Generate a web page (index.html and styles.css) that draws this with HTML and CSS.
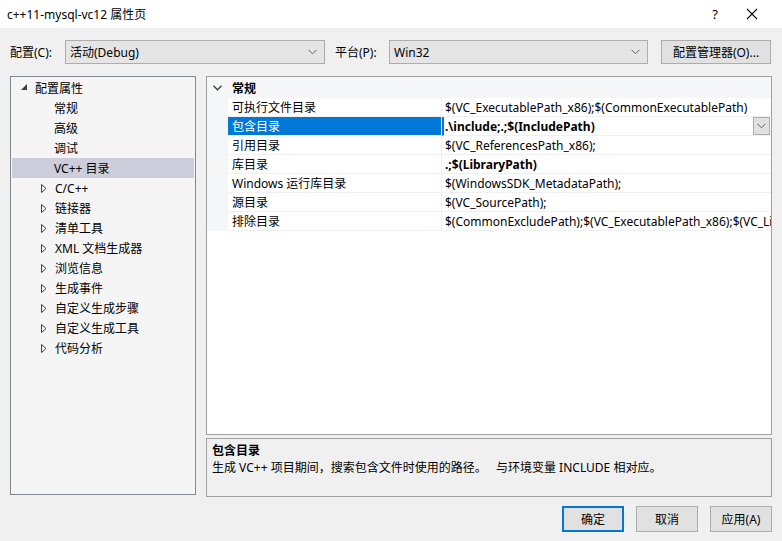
FILE: index.html
```html
<!DOCTYPE html>
<html>
<head>
  <meta charset="utf-8">
  <title>c++11-mysql-vc12 属性页</title>
  <link rel="stylesheet" href="styles.css">
</head>
<body>
  <div class="titlebar">
    <span class="title">c++11-mysql-vc12 属性页</span>
    <span class="help">?</span>
    <svg class="close" width="12" height="12" viewBox="0 0 12 12"><path d="M1 1L11 11M11 1L1 11" stroke="#000" stroke-width="1.1" fill="none"/></svg>
  </div>

  <div class="dialog">
    <!-- 配置 / 平台 -->
    <div class="toolbar">
      <label class="lbl-config">配置(C):</label>
      <div class="combo combo-config">
        <span>活动(Debug)</span>
        <svg width="9" height="6" viewBox="0 0 9 6"><path d="M0.5 0.8L4.5 4.8L8.5 0.8" stroke="#606060" fill="none"/></svg>
      </div>
      <label class="lbl-platform">平台(P):</label>
      <div class="combo combo-platform">
        <span>Win32</span>
        <svg width="9" height="6" viewBox="0 0 9 6"><path d="M0.5 0.8L4.5 4.8L8.5 0.8" stroke="#606060" fill="none"/></svg>
      </div>
      <button class="btn btn-manager">配置管理器(O)...</button>
    </div>

    <div class="panes">
      <div class="tree">
        <div class="node root">
          <svg class="arrow" width="6" height="6" viewBox="0 0 6 6"><path d="M6 0L6 6L0 6Z" fill="#404040"/></svg>
          <span>配置属性</span>
        </div>
        <div class="node leaf">常规</div>
        <div class="node leaf">高级</div>
        <div class="node leaf">调试</div>
        <div class="node leaf selected">VC++ 目录</div>
        <div class="node group"><svg class="arrow" width="6" height="9" viewBox="0 0 6 9"><path d="M0.5 0.5L5 4.5L0.5 8.5Z" stroke="#404040" fill="none"/></svg><span>C/C++</span></div>
        <div class="node group"><svg class="arrow" width="6" height="9" viewBox="0 0 6 9"><path d="M0.5 0.5L5 4.5L0.5 8.5Z" stroke="#404040" fill="none"/></svg><span>链接器</span></div>
        <div class="node group"><svg class="arrow" width="6" height="9" viewBox="0 0 6 9"><path d="M0.5 0.5L5 4.5L0.5 8.5Z" stroke="#404040" fill="none"/></svg><span>清单工具</span></div>
        <div class="node group"><svg class="arrow" width="6" height="9" viewBox="0 0 6 9"><path d="M0.5 0.5L5 4.5L0.5 8.5Z" stroke="#404040" fill="none"/></svg><span>XML 文档生成器</span></div>
        <div class="node group"><svg class="arrow" width="6" height="9" viewBox="0 0 6 9"><path d="M0.5 0.5L5 4.5L0.5 8.5Z" stroke="#404040" fill="none"/></svg><span>浏览信息</span></div>
        <div class="node group"><svg class="arrow" width="6" height="9" viewBox="0 0 6 9"><path d="M0.5 0.5L5 4.5L0.5 8.5Z" stroke="#404040" fill="none"/></svg><span>生成事件</span></div>
        <div class="node group"><svg class="arrow" width="6" height="9" viewBox="0 0 6 9"><path d="M0.5 0.5L5 4.5L0.5 8.5Z" stroke="#404040" fill="none"/></svg><span>自定义生成步骤</span></div>
        <div class="node group"><svg class="arrow" width="6" height="9" viewBox="0 0 6 9"><path d="M0.5 0.5L5 4.5L0.5 8.5Z" stroke="#404040" fill="none"/></svg><span>自定义生成工具</span></div>
        <div class="node group"><svg class="arrow" width="6" height="9" viewBox="0 0 6 9"><path d="M0.5 0.5L5 4.5L0.5 8.5Z" stroke="#404040" fill="none"/></svg><span>代码分析</span></div>
      </div>

      <div class="right">
        <div class="grid">
          <div class="category">
            <div class="gutter"><svg width="9" height="6" viewBox="0 0 9 6"><path d="M0.5 0.8L4.5 4.8L8.5 0.8" stroke="#404040" stroke-width="1.3" fill="none"/></svg></div>
            <div class="cat-name">常规</div>
          </div>
          <div class="prop">
            <div class="gutter"></div>
            <div class="name">可执行文件目录</div>
            <div class="value">$(VC_ExecutablePath_x86);$(CommonExecutablePath)</div>
          </div>
          <div class="prop active">
            <div class="gutter"></div>
            <div class="name">包含目录</div>
            <div class="value bold">.\include;.;$(IncludePath)
              <span class="drop"><svg width="9" height="6" viewBox="0 0 9 6"><path d="M0.5 0.8L4.5 4.8L8.5 0.8" stroke="#606060" fill="none"/></svg></span>
            </div>
          </div>
          <div class="prop">
            <div class="gutter"></div>
            <div class="name">引用目录</div>
            <div class="value">$(VC_ReferencesPath_x86);</div>
          </div>
          <div class="prop">
            <div class="gutter"></div>
            <div class="name">库目录</div>
            <div class="value bold">.;$(LibraryPath)</div>
          </div>
          <div class="prop">
            <div class="gutter"></div>
            <div class="name">Windows 运行库目录</div>
            <div class="value">$(WindowsSDK_MetadataPath);</div>
          </div>
          <div class="prop">
            <div class="gutter"></div>
            <div class="name">源目录</div>
            <div class="value">$(VC_SourcePath);</div>
          </div>
          <div class="prop">
            <div class="gutter"></div>
            <div class="name">排除目录</div>
            <div class="value">$(CommonExcludePath);$(VC_ExecutablePath_x86);$(VC_LibraryPath_x86)</div>
          </div>
        </div>

        <div class="desc">
          <div class="desc-title">包含目录</div>
          <div class="desc-text">生成 VC++ 项目期间，搜索包含文件时使用的路径。&nbsp;&nbsp;&nbsp;与环境变量 INCLUDE 相对应。</div>
        </div>
      </div>
    </div>

    <div class="footer">
      <button class="btn default">确定</button>
      <button class="btn">取消</button>
      <button class="btn">应用(A)</button>
    </div>
  </div>
</body>
</html>
```

FILE: styles.css
```css
body {
  margin: 0;
  width: 782px;
  height: 541px;
  overflow: hidden;
  background: #f0f0f0;
  font-family: "Segoe UI", "Noto Sans", "Noto Sans CJK SC", sans-serif;
  font-size: 12px;
  color: #000;
}

.titlebar {
  height: 28px;
  background: #fff;
  display: flex;
  align-items: center;
  padding-left: 7px;
}

.title {
  flex: 1;
  font-size: 12px;
}

.help {
  font-size: 13px;
  margin-right: 28px;
}

.close {
  margin-right: 24px;
}

.dialog {
  padding: 0 10px 0 10px;
}

.toolbar {
  display: flex;
  align-items: center;
  height: 24px;
  margin-top: 12px;
}

.lbl-config {
  width: 55px;
}

.lbl-platform {
  width: 54px;
  margin-left: 10px;
}

.combo {
  height: 24px;
  box-sizing: border-box;
  border: 1px solid #adadad;
  background: #e5e5e5;
  display: flex;
  align-items: center;
  justify-content: space-between;
  padding: 0 7px 0 4px;
}

.combo-config {
  width: 260px;
}

.combo-platform {
  width: 259px;
}

.btn {
  font-family: inherit;
  font-size: 12px;
  color: #000;
  background: #e1e1e1;
  border: 1px solid #adadad;
  height: 25px;
  box-sizing: border-box;
  padding: 0;
}

.btn-manager {
  width: 110px;
  height: 24px;
  margin-left: 13px;
}

.panes {
  display: flex;
  gap: 10px;
  margin-top: 12px;
  height: 421px;
}

.tree {
  width: 186px;
  flex-shrink: 0;
  box-sizing: border-box;
  border: 1px solid #828790;
  background: #f5f5f5;
  padding: 1px 1px 0 1px;
  height: 419px;
}

.node {
  height: 20px;
  display: flex;
  align-items: center;
  white-space: nowrap;
}

.node.root {
  padding-left: 9px;
}

.node.root .arrow {
  margin-right: 8px;
  margin-top: -2px;
}

.node.leaf {
  padding-left: 42px;
}

.node.group {
  padding-left: 29px;
}

.node.group .arrow {
  margin-right: 8px;
}

.node.selected {
  background: #cccedb;
}

.right {
  flex: 1;
  min-width: 0;
  display: flex;
  flex-direction: column;
  gap: 3px;
}

.grid {
  flex: 1;
  min-height: 0;
  border: 1px solid #a0a0a0;
  background: #fff;
  display: flex;
  flex-direction: column;
  overflow: hidden;
}

.gutter {
  width: 21px;
  flex-shrink: 0;
  background: #f5f6f8;
  display: flex;
  align-items: center;
  justify-content: center;
}

.category {
  height: 21px;
  flex-shrink: 0;
  display: flex;
  background: #f5f6f8;
}

.cat-name {
  font-weight: bold;
  display: flex;
  align-items: center;
  padding-left: 4px;
}

.prop {
  height: 19px;
  flex-shrink: 0;
  display: flex;
  white-space: nowrap;
  min-width: 0;
}

.prop .name {
  width: 214px;
  box-sizing: border-box;
  flex-shrink: 0;
  padding-left: 4px;
  display: flex;
  align-items: center;
  border-bottom: 1px solid #f0f0f0;
  border-right: 1px solid #f0f0f0;
}

.prop .value {
  flex: 1;
  min-width: 0;
  padding-left: 3px;
  display: flex;
  align-items: center;
  overflow: hidden;
  border-bottom: 1px solid #f0f0f0;
  position: relative;
}

.prop .value.bold {
  font-weight: bold;
}

.prop.active .name {
  background: #0078d7;
  color: #fff;
}

.prop.active .value {
  border-left: 2px solid #0078d7;
  padding-left: 1px;
}

.drop {
  position: absolute;
  right: 1px;
  top: 0;
  width: 17px;
  height: 18px;
  box-sizing: border-box;
  border: 1px solid #adadad;
  background: #e1e1e1;
  display: flex;
  align-items: center;
  justify-content: center;
}

.desc {
  height: 59px;
  flex-shrink: 0;
  box-sizing: border-box;
  border: 1px solid #a0a0a0;
  padding: 3px 5px;
}

.desc-title {
  font-weight: bold;
  line-height: 17px;
}

.desc-text {
  line-height: 17px;
}

.footer {
  display: flex;
  justify-content: flex-end;
  gap: 12px;
  margin-top: 9px;
}

.footer .btn {
  width: 62px;
  height: 26px;
}

.footer .btn.default {
  border: 2px solid #0078d7;
}
```
